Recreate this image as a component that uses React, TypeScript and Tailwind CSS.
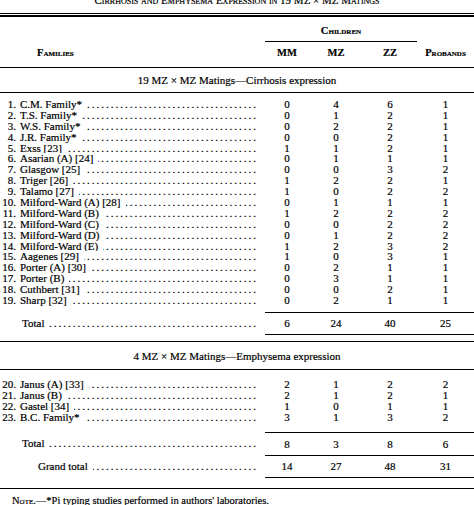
const cirrhosis: [string, number, number, number, number][] = [
  ["C.M. Family*", 0, 4, 6, 1],
  ["T.S. Family*", 0, 1, 2, 1],
  ["W.S. Family*", 0, 2, 2, 1],
  ["J.R. Family*", 0, 0, 2, 1],
  ["Exss [23]", 1, 1, 2, 1],
  ["Asarian (A) [24]", 0, 1, 1, 1],
  ["Glasgow [25]", 0, 0, 3, 2],
  ["Triger [26]", 1, 2, 2, 1],
  ["Talamo [27]", 1, 0, 2, 2],
  ["Milford-Ward (A) [28]", 0, 1, 1, 1],
  ["Milford-Ward (B)", 1, 2, 2, 2],
  ["Milford-Ward (C)", 0, 0, 2, 2],
  ["Milford-Ward (D)", 0, 1, 2, 2],
  ["Milford-Ward (E)", 1, 2, 3, 2],
  ["Aagenes [29]", 1, 0, 3, 1],
  ["Porter (A) [30]", 0, 2, 1, 1],
  ["Porter (B)", 0, 3, 1, 1],
  ["Cuthbert [31]", 0, 0, 2, 1],
  ["Sharp [32]", 0, 2, 1, 1],
];

const emphysema: [string, number, number, number, number][] = [
  ["Janus (A) [33]", 2, 1, 2, 2],
  ["Janus (B)", 2, 1, 2, 1],
  ["Gastel [34]", 1, 0, 1, 1],
  ["B.C. Family*", 3, 1, 3, 2],
];

const cols = "grid grid-cols-[265px_44px_54px_54px_57px]";
const dots = ".".repeat(70);

// name followed by dot leaders that end on the same x for every row
function Leader({ children, indent = 0 }: { children: React.ReactNode; indent?: number }) {
  return (
    <div className="flex min-w-0 overflow-hidden pr-[7px]" style={{ paddingLeft: indent }}>
      <span className="whitespace-nowrap">{children}</span>
      <span className="ml-[5px] flex min-w-0 flex-1 justify-end overflow-hidden whitespace-nowrap tracking-[2px]">
        {dots}
      </span>
    </div>
  );
}

function Row({ n, r }: { n: number; r: [string, number, number, number, number] }) {
  return (
    <div className={`${cols} h-[10.9px] leading-[10.9px]`}>
      <Leader>
        <span className="inline-block w-[16px] text-right">{n}.</span>
        <span className="ml-[4px]">{r[0]}</span>
      </Leader>
      {r.slice(1).map((v, i) => (
        <div key={i} className="text-center">
          {v}
        </div>
      ))}
    </div>
  );
}

function Sum({ label, vals, indent, bottom }: { label: string; vals: number[]; indent: number; bottom?: boolean }) {
  return (
    <div className={`${cols} h-[23px]`}>
      <div className="min-w-0 self-center">
        <Leader indent={indent}>{label}</Leader>
      </div>
      <div
        className={`col-span-4 grid grid-cols-[44px_54px_54px_57px] items-center border-t-[1.5px] border-black ${
          bottom ? "border-b-[1.5px]" : ""
        }`}
      >
        {vals.map((v, i) => (
          <div key={i} className="text-center">
            {v}
          </div>
        ))}
      </div>
    </div>
  );
}

export default function App() {
  return (
    <div className="w-[474px] h-[505px] overflow-hidden bg-white text-black font-['Liberation_Serif',serif] text-[11px] [-webkit-text-stroke:0.2px_#000]">
      {/* caption, cut at the top edge */}
      <div className="h-[8px] overflow-hidden">
        <div className="-mt-[6px] text-center leading-[12px] [font-variant-caps:small-caps]">
          Cirrhosis and Emphysema Expression in 19 MZ × MZ Matings
        </div>
      </div>
      <div className="mt-[5px] h-[1px] bg-black" />
      <div className="mt-[1px] h-[1.5px] bg-black" />

      {/* header */}
      <div className={`${cols} h-[25px]`}>
        <div />
        <div className="col-span-3 flex items-center justify-center pt-[5px] border-b border-black font-semibold [font-variant-caps:small-caps] text-[10.5px]">
          Children
        </div>
        <div />
      </div>
      <div className={`${cols} h-[25px] items-center pb-[3px] font-semibold text-[10.5px] [font-variant-caps:small-caps]`}>
        <div className="pl-[37px]">Families</div>
        <div className="text-center">MM</div>
        <div className="text-center">MZ</div>
        <div className="text-center">ZZ</div>
        <div className="text-center">Probands</div>
      </div>
      <div className="h-[1.5px] bg-black" />

      <div className="h-[24px] flex items-center justify-center">19 MZ × MZ Matings—Cirrhosis expression</div>
      <div className="h-[1px] bg-black" />

      <div className="pt-[6px]">
        {cirrhosis.map((r, i) => (
          <Row key={i} n={i + 1} r={r} />
        ))}
      </div>
      <div className="mt-[6px]">
        <Sum label="Total" vals={[6, 24, 40, 25]} indent={22} bottom />
      </div>
      <div className="mt-[6px] h-[1.5px] bg-black" />

      <div className="h-[27px] flex items-center justify-center">4 MZ × MZ Matings—Emphysema expression</div>
      <div className="h-[1px] bg-black" />

      <div className="pt-[9px]">
        {emphysema.map((r, i) => (
          <Row key={i} n={i + 20} r={r} />
        ))}
      </div>
      <div className="mt-[9px]">
        <Sum label="Total" vals={[8, 3, 8, 6]} indent={22} />
        <Sum label="Grand total" vals={[14, 27, 48, 31]} indent={38} bottom />
      </div>
      <div className="mt-[10px] h-[1.5px] bg-black" />
      <div className="mt-[4px] pl-[12px] text-[10.5px]">
        <span className="[font-variant-caps:small-caps]">Note</span>.—*Pi typing studies performed in authors' laboratories.
      </div>
    </div>
  );
}
